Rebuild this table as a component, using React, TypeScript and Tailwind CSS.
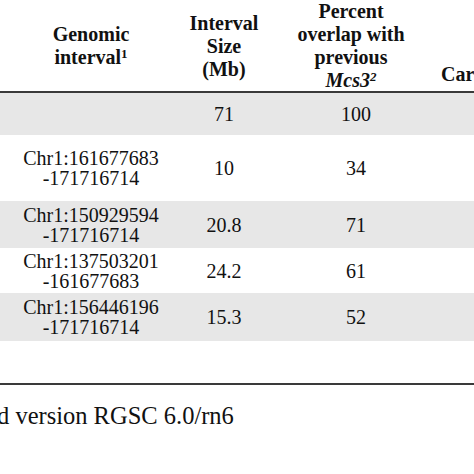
const rows = [
  { h: "h-[42px]", gray: true, interval: null, size: "71", overlap: "100" },
  { h: "h-[66px]", gray: false, interval: ["Chr1:161677683", "-171716714"], size: "10", overlap: "34" },
  { h: "h-[47px]", gray: true, interval: ["Chr1:150929594", "-171716714"], size: "20.8", overlap: "71" },
  { h: "h-[45px]", gray: false, interval: ["Chr1:137503201", "-161677683"], size: "24.2", overlap: "61" },
  { h: "h-[48px]", gray: true, interval: ["Chr1:156446196", "-171716714"], size: "15.3", overlap: "52" },
];

export default function App() {
  return (
    <div className="h-[474px] w-[474px] overflow-hidden bg-white font-[family-name:'Liberation_Serif','Times_New_Roman',serif] text-[#111]">
      {/* header */}
      <div className="grid h-[91px] grid-cols-[182px_84px_174px_1fr] items-center text-[20px] font-bold leading-[23px]">
        <div className="text-center">
          Genomic
          <br />
          interval<sup className="text-[13px]">1</sup>
        </div>
        <div className="text-center">
          Interval
          <br />
          Size
          <br />
          (Mb)
        </div>
        <div className="pr-1 text-center">
          Percent
          <br />
          overlap with
          <br />
          previous
          <br />
          <i>
            Mcs3<sup className="text-[13px]">2</sup>
          </i>
        </div>
        <div className="self-end whitespace-nowrap pb-[6px] pl-[1px]">Car</div>
      </div>
      <div className="h-[2px] bg-[#3a3a3a]" />

      {/* body */}
      {rows.map((r, i) => (
        <div
          key={i}
          className={`grid grid-cols-[182px_84px_174px_1fr] items-center text-[20px] leading-[20px] ${r.h} ${
            r.gray ? "bg-[#e7e7e7]" : "bg-white"
          }`}
        >
          <div className="text-center">
            {r.interval && (
              <>
                {r.interval[0]}
                <br />
                {r.interval[1]}
              </>
            )}
          </div>
          <div className="text-center">{r.size}</div>
          <div className="pl-[6px] text-center">{r.overlap}</div>
          <div />
        </div>
      ))}

      <div className="h-[42px]" />
      <div className="h-[2px] bg-[#3a3a3a]" />

      {/* footnote */}
      <p className="mt-[16px] -ml-[3px] whitespace-nowrap text-[24.5px] leading-[30px]">
        d version RGSC 6.0/rn6
      </p>
    </div>
  );
}
